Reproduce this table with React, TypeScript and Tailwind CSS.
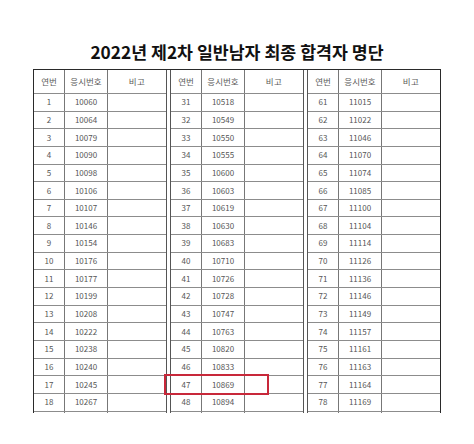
const groups = [
  {
    start: 1,
    nums: [
      "10060", "10064", "10079", "10090", "10098", "10106", "10107", "10146", "10154",
      "10176", "10177", "10199", "10208", "10222", "10238", "10240", "10245", "10267",
    ],
    edge: "border-l-[1.5px] border-l-[#2a2a2a] border-r border-r-[#555]",
  },
  {
    start: 31,
    nums: [
      "10518", "10549", "10550", "10555", "10600", "10603", "10619", "10630", "10683",
      "10710", "10726", "10728", "10747", "10763", "10820", "10833", "10869", "10894",
    ],
    edge: "border-l border-l-[#555] border-r border-r-[#555]",
  },
  {
    start: 61,
    nums: [
      "11015", "11022", "11046", "11070", "11074", "11085", "11100", "11104", "11114",
      "11126", "11136", "11146", "11149", "11157", "11161", "11163", "11164", "11169",
    ],
    edge: "border-l border-l-[#555] border-r-[1.5px] border-r-[#2a2a2a]",
  },
];

function Group({ start, nums, edge }: { start: number; nums: string[]; edge: string }) {
  return (
    <div className={`w-[134px] flex flex-col ${edge}`}>
      {/* Head */}
      <div className="flex h-[24px] shrink-0 border-b-[1.5px] border-[#8c8c8c] text-[8.5px] text-[#5a5a5a]">
        <div className="w-[31px] flex items-center justify-center border-r border-[#777]">연번</div>
        <div className="w-[43px] flex items-center justify-center border-r border-[#777]">응시번호</div>
        <div className="flex-1 flex items-center justify-center tracking-[0.5px]">비고</div>
      </div>

      {/* Rows */}
      {nums.map((n, i) => (
        <div
          key={n}
          className="flex h-[17.65px] shrink-0 border-b-[1.5px] border-[#8c8c8c] text-[8px] text-[#555]"
        >
          <div className="w-[31px] flex items-center justify-center border-r border-[#777]">{start + i}</div>
          <div className="w-[43px] flex items-center justify-center border-r border-[#777]">{n}</div>
          <div className="flex-1" />
        </div>
      ))}

      {/* Cut-off row */}
      <div className="flex h-[17.65px] shrink-0">
        <div className="w-[31px] border-r border-[#777]" />
        <div className="w-[43px] border-r border-[#777]" />
        <div className="flex-1" />
      </div>
    </div>
  );
}

export default function App() {
  return (
    <div className="relative w-[474px] h-[444px] bg-white font-['Noto_Sans_CJK_KR',sans-serif]">
      {/* Title */}
      <h1 className="pt-[42px] text-center text-[17.3px] leading-[20px] font-bold text-[#111]">
        2022년 제2차 일반남자 최종 합격자 명단
      </h1>

      {/* Table */}
      <div className="mt-[7px] ml-[33px] w-[408px] h-[344px] overflow-hidden flex gap-[3px] border-t-[1.5px] border-[#2a2a2a]">
        {groups.map((g) => (
          <Group key={g.start} {...g} />
        ))}
      </div>

      {/* Highlight */}
      <div className="absolute left-[164px] top-[374px] w-[105px] h-[21px] border-2 border-[#c8283a]" />
    </div>
  );
}
